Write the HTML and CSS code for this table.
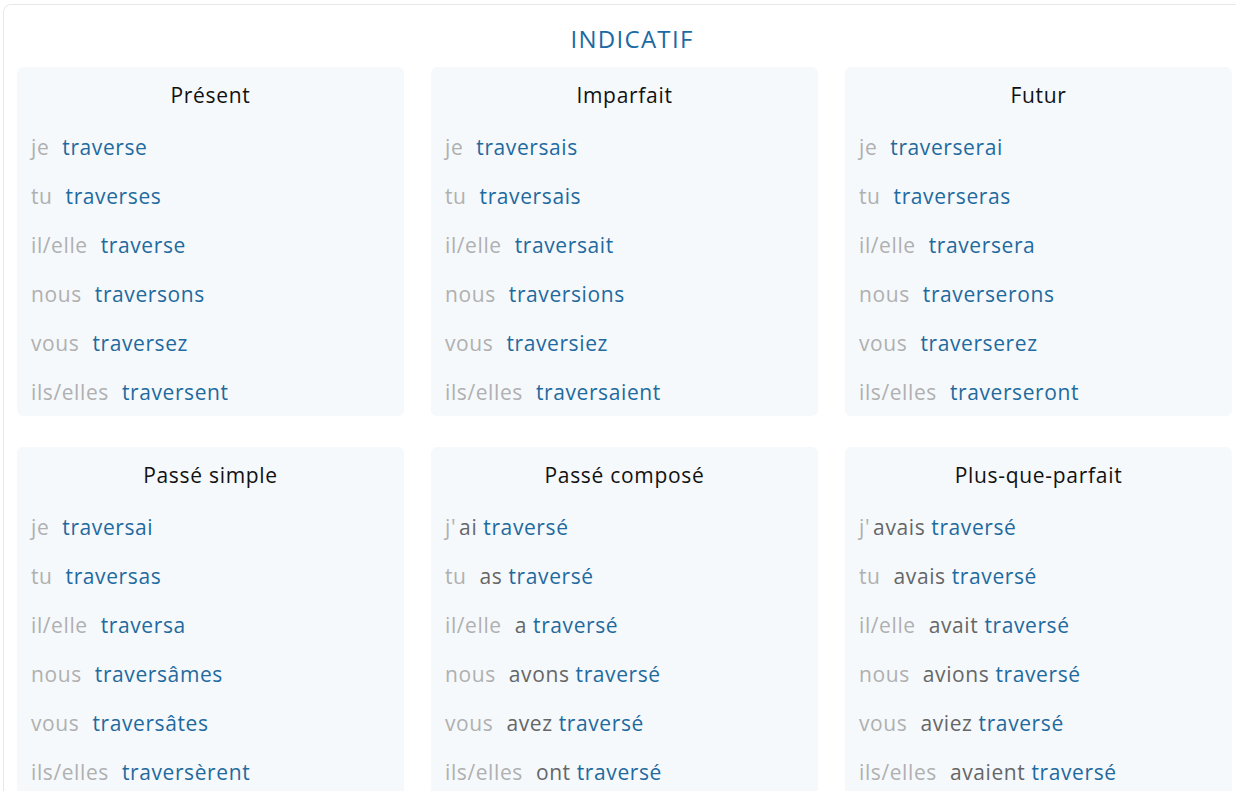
FILE: index.html
```html
<!DOCTYPE html>
<html lang="fr">
<head>
<meta charset="utf-8">
<title>Indicatif - traverser</title>
<link rel="stylesheet" href="styles.css">
</head>
<body>
<section class="mode">
  <h2 class="mode-title">INDICATIF</h2>
  <div class="grid">
    <div class="card">
      <h3 class="tense">Présent</h3>
      <ul class="rows">
        <li><span class="pr">je</span><span class="vb">traverse</span></li>
        <li><span class="pr">tu</span><span class="vb">traverses</span></li>
        <li><span class="pr">il/elle</span><span class="vb">traverse</span></li>
        <li><span class="pr">nous</span><span class="vb">traversons</span></li>
        <li><span class="pr">vous</span><span class="vb">traversez</span></li>
        <li><span class="pr">ils/elles</span><span class="vb">traversent</span></li>
      </ul>
    </div>
    <div class="card">
      <h3 class="tense">Imparfait</h3>
      <ul class="rows">
        <li><span class="pr">je</span><span class="vb">traversais</span></li>
        <li><span class="pr">tu</span><span class="vb">traversais</span></li>
        <li><span class="pr">il/elle</span><span class="vb">traversait</span></li>
        <li><span class="pr">nous</span><span class="vb">traversions</span></li>
        <li><span class="pr">vous</span><span class="vb">traversiez</span></li>
        <li><span class="pr">ils/elles</span><span class="vb">traversaient</span></li>
      </ul>
    </div>
    <div class="card">
      <h3 class="tense">Futur</h3>
      <ul class="rows">
        <li><span class="pr">je</span><span class="vb">traverserai</span></li>
        <li><span class="pr">tu</span><span class="vb">traverseras</span></li>
        <li><span class="pr">il/elle</span><span class="vb">traversera</span></li>
        <li><span class="pr">nous</span><span class="vb">traverserons</span></li>
        <li><span class="pr">vous</span><span class="vb">traverserez</span></li>
        <li><span class="pr">ils/elles</span><span class="vb">traverseront</span></li>
      </ul>
    </div>
    <div class="card">
      <h3 class="tense">Passé simple</h3>
      <ul class="rows">
        <li><span class="pr">je</span><span class="vb">traversai</span></li>
        <li><span class="pr">tu</span><span class="vb">traversas</span></li>
        <li><span class="pr">il/elle</span><span class="vb">traversa</span></li>
        <li><span class="pr">nous</span><span class="vb">traversâmes</span></li>
        <li><span class="pr">vous</span><span class="vb">traversâtes</span></li>
        <li><span class="pr">ils/elles</span><span class="vb">traversèrent</span></li>
      </ul>
    </div>
    <div class="card">
      <h3 class="tense">Passé composé</h3>
      <ul class="rows">
        <li><span class="pr elided">j'</span><span class="aux">ai</span> <span class="vb">traversé</span></li>
        <li><span class="pr">tu</span><span class="aux">as</span> <span class="vb">traversé</span></li>
        <li><span class="pr">il/elle</span><span class="aux">a</span> <span class="vb">traversé</span></li>
        <li><span class="pr">nous</span><span class="aux">avons</span> <span class="vb">traversé</span></li>
        <li><span class="pr">vous</span><span class="aux">avez</span> <span class="vb">traversé</span></li>
        <li><span class="pr">ils/elles</span><span class="aux">ont</span> <span class="vb">traversé</span></li>
      </ul>
    </div>
    <div class="card">
      <h3 class="tense">Plus-que-parfait</h3>
      <ul class="rows">
        <li><span class="pr elided">j'</span><span class="aux">avais</span> <span class="vb">traversé</span></li>
        <li><span class="pr">tu</span><span class="aux">avais</span> <span class="vb">traversé</span></li>
        <li><span class="pr">il/elle</span><span class="aux">avait</span> <span class="vb">traversé</span></li>
        <li><span class="pr">nous</span><span class="aux">avions</span> <span class="vb">traversé</span></li>
        <li><span class="pr">vous</span><span class="aux">aviez</span> <span class="vb">traversé</span></li>
        <li><span class="pr">ils/elles</span><span class="aux">avaient</span> <span class="vb">traversé</span></li>
      </ul>
    </div>
  </div>
</section>
</body>
</html>
```

FILE: styles.css
```css
html, body {
  margin: 0;
  padding: 0;
  background: #ffffff;
  overflow: hidden;
}

body {
  font-family: "Open Sans", "Noto Sans", sans-serif;
  color: #111;
}

.mode {
  margin: 4px 0 0 3px;
  width: 1241px;
  box-sizing: border-box;
  border: 1px solid #e8e8e8;
  border-radius: 8px;
  padding: 0 13px 20px 13px;
  background: #fff;
}

.mode-title {
  margin: 0;
  padding: 15px 0 0 17px;
  height: 62px;
  box-sizing: border-box;
  line-height: 38px;
  text-align: center;
  font-size: 24px;
  font-weight: 400;
  color: #1c6aa3;
  letter-spacing: 1.3px;
}

.grid {
  display: grid;
  grid-template-columns: repeat(3, 387px);
  column-gap: 27px;
  row-gap: 31px;
}

.card {
  background: #f5f9fc;
  border-radius: 6px;
  padding: 14px 14px 0 14px;
  height: 349px;
  box-sizing: border-box;
}

.tense {
  margin: 0 0 14px 0;
  text-align: center;
  font-size: 21px;
  line-height: 28px;
  font-weight: 500;
  color: #111;
  letter-spacing: 0.7px;
}

.rows {
  list-style: none;
  margin: 0;
  padding: 0;
}

.rows li {
  line-height: 49px;
  height: 49px;
  font-size: 21px;
  font-weight: 500;
  letter-spacing: 0.6px;
  white-space: nowrap;
}

.pr {
  color: #b0b0b0;
  margin-right: 13px;
}

.pr.elided {
  margin-right: 3px;
}

.aux {
  color: #666666;
}

.vb {
  color: #1f6a9e;
}
```
